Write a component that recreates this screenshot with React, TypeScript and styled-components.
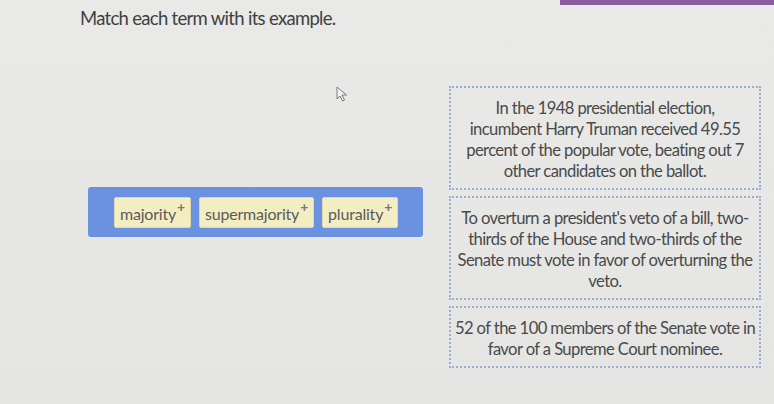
import styled, { createGlobalStyle } from "styled-components";

const GlobalStyle = createGlobalStyle`
  html, body {
    margin: 0;
    padding: 0;
    background: #e7e7e6;
  }
  body {
    font-family: Lato, "Noto Sans", sans-serif;
  }
`;

const Page = styled.div`
  position: relative;
  width: 774px;
  height: 404px;
  overflow: hidden;
  background: linear-gradient(180deg, #e9e9e8 0%, #e5e5e4 100%);
`;

const TopBar = styled.div`
  position: absolute;
  top: 0;
  left: 560px;
  right: 0;
  height: 5px;
  background: #8b5e9f;
`;

const Title = styled.h1`
  margin: 0;
  padding: 5px 0 0 80px;
  font-size: 18.5px;
  line-height: 26px;
  font-weight: 400;
  color: #404040;
  letter-spacing: -0.7px;
`;

const Content = styled.div`
  display: flex;
  align-items: flex-start;
  padding: 55px 0 0 88px;
`;

const Bank = styled.div`
  display: flex;
  align-items: center;
  gap: 8px;
  width: 335px;
  height: 50px;
  margin-top: 101px;
  padding: 0 26px;
  box-sizing: border-box;
  background: #6b91e1;
  border-radius: 3px;
`;

const Chip = styled.div`
  display: flex;
  align-items: flex-start;
  height: 31px;
  padding: 1px 5px 0 5px;
  box-sizing: border-box;
  background: #f3edc2;
  border: 1px solid #e0d7a8;
  border-radius: 2px;
  font-size: 16px;
  line-height: 30px;
  letter-spacing: -0.2px;
  color: #5b5b5b;
`;

const Plus = styled.span`
  font-size: 14px;
  line-height: 14px;
  font-weight: 700;
  margin: 1px 0 0 1px;
  color: #777;
`;

const Targets = styled.div`
  display: flex;
  flex-direction: column;
  gap: 6px;
  margin-left: 26px;
`;

const Target = styled.div<{ $h: number }>`
  width: 312px;
  height: ${(p) => p.$h}px;
  box-sizing: border-box;
  display: flex;
  flex-direction: column;
  align-items: center;
  justify-content: center;
  padding: 3px 0 0;
  border: 2px dotted #9aaed2;
  font-size: 16.6px;
  line-height: 21px;
  color: #4a4a4a;
  letter-spacing: -0.6px;
  white-space: nowrap;
`;

const Cursor = styled.svg`
  position: absolute;
  left: 336px;
  top: 86px;
`;

const terms = ["majority", "supermajority", "plurality"];

const examples = [
  {
    h: 104,
    lines: [
      "In the 1948 presidential election,",
      "incumbent Harry Truman received 49.55",
      "percent of the popular vote, beating out 7",
      "other candidates on the ballot.",
    ],
  },
  {
    h: 104,
    lines: [
      "To overturn a president's veto of a bill, two-",
      "thirds of the House and two-thirds of the",
      "Senate must vote in favor of overturning the",
      "veto.",
    ],
  },
  {
    h: 62,
    lines: [
      "52 of the 100 members of the Senate vote in",
      "favor of a Supreme Court nominee.",
    ],
  },
];

export default function App() {
  return (
    <Page>
      <GlobalStyle />
      <TopBar />
      <Title>Match each term with its example.</Title>
      <Content>
        <Bank>
          {terms.map((t) => (
            <Chip key={t}>
              {t}
              <Plus>+</Plus>
            </Chip>
          ))}
        </Bank>
        <Targets>
          {examples.map((e, i) => (
            <Target key={i} $h={e.h}>
              {e.lines.map((l) => (
                <span key={l}>{l}</span>
              ))}
            </Target>
          ))}
        </Targets>
      </Content>
      <Cursor width="12" height="16" viewBox="0 0 12 16">
        <path
          d="M1 1 L1 13 L4 10 L6.5 15 L8.5 14 L6 9 L10.5 9 Z"
          fill="#f2f2f2"
          stroke="#7a7a7a"
          strokeWidth="1"
        />
      </Cursor>
    </Page>
  );
}
